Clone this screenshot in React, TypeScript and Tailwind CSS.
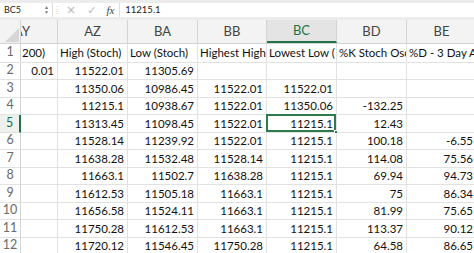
import React from 'react';

// Column headers: AY is scrolled half out of view behind the row numbers
const cols = [
  { id: 'AZ', w: 'w-[70px]' },
  { id: 'BA', w: 'w-[70px]' },
  { id: 'BB', w: 'w-[69px]' },
  { id: 'BC', w: 'w-[70px]' },
  { id: 'BD', w: 'w-[70px]' },
  { id: 'BE', w: 'w-[70px]' },
];

type Row = { ay: string; cells: string[] };

const rows: Row[] = [
  { ay: '200)', cells: ['High (Stoch)', 'Low (Stoch)', 'Highest High', 'Lowest Low (', '%K Stoch Osc', '%D - 3 Day Avg'] },
  { ay: '0.01', cells: ['11522.01', '11305.69', '', '', '', ''] },
  { ay: '', cells: ['11350.06', '10986.45', '11522.01', '11522.01', '', ''] },
  { ay: '', cells: ['11215.1', '10938.67', '11522.01', '11350.06', '-132.25', ''] },
  { ay: '', cells: ['11313.45', '11098.45', '11522.01', '11215.1', '12.43', ''] },
  { ay: '', cells: ['11528.14', '11239.92', '11522.01', '11215.1', '100.18', '-6.55'] },
  { ay: '', cells: ['11638.28', '11532.48', '11528.14', '11215.1', '114.08', '75.56'] },
  { ay: '', cells: ['11663.1', '11502.7', '11638.28', '11215.1', '69.94', '94.73'] },
  { ay: '', cells: ['11612.53', '11505.18', '11663.1', '11215.1', '75', '86.34'] },
  { ay: '', cells: ['11656.58', '11524.11', '11663.1', '11215.1', '81.99', '75.65'] },
  { ay: '', cells: ['11750.28', '11612.53', '11663.1', '11215.1', '113.37', '90.12'] },
  { ay: '', cells: ['11720.12', '11546.45', '11750.28', '11215.1', '64.58', '86.65'] },
];

function FormulaBar() {
  return (
    <div className="h-[20px] bg-[#ececec] pt-[3px]">
      <div className="h-[14px] bg-white flex items-center text-[#222]">
        <div className="w-[53px] h-full flex items-center justify-between pl-[4px] pr-[3px] border-r border-[#dcdcdc]">
          <span className="text-[9px] font-['Lato',sans-serif]">BC5</span>
          <span className="flex flex-col leading-none text-[5px] text-[#777]">
            <span>▲</span>
            <span>▼</span>
          </span>
        </div>
        <span className="ml-[3px] text-[8px] text-[#c8c8c8] leading-none">⁞</span>
        <span className="ml-[8px] text-[12px] text-[#b8b8b8] leading-none font-['DejaVu_Sans',sans-serif]">×</span>
        <span className="ml-[11px] text-[11px] text-[#b8b8b8] leading-none font-['DejaVu_Sans',sans-serif]">✓</span>
        <span className="ml-[10px] text-[11px] italic text-[#444] leading-none font-['Liberation_Serif',serif]">fx</span>
        <div className="ml-[5px] h-full border-l border-[#dcdcdc]" />
        <span className="ml-[5px] text-[9.5px] font-['Lato',sans-serif]">11215.1</span>
      </div>
    </div>
  );
}

function HeaderRow() {
  return (
    <div className="flex h-[24px] bg-[#f3f3f3] border-b border-[#d4d4d4] text-[13px] text-[#444]">
      <div className="w-[21px] shrink-0 h-full flex items-end justify-end border-r border-[#d4d4d4] relative z-10 bg-[#f3f3f3]">
        <svg width="14" height="14" viewBox="0 0 14 14" className="mb-[1px] mr-[1px]">
          <polygon points="14,0 14,14 0,14" fill="#d6d6d6" />
        </svg>
      </div>
      <div className="w-[37px] shrink-0 overflow-hidden flex justify-end border-r border-[#d4d4d4]">
        <div className="w-[70px] shrink-0 flex items-center justify-center">AY</div>
      </div>
      {cols.map((c) => (
        <div
          key={c.id}
          className={`${c.w} shrink-0 flex items-center justify-center border-r border-[#d4d4d4] ${
            c.id === 'BC' ? 'bg-[#e4e4e4] border-b-2 border-b-[#217346] text-[#217346]' : ''
          }`}
        >
          {c.id}
        </div>
      ))}
    </div>
  );
}

function DataRow({ row, n }: { row: Row; n: number }) {
  const active = n === 5;
  const isHead = n === 1;
  return (
    <div className={`flex ${n === 1 ? 'h-[18.5px]' : 'h-[17.5px]'} text-[11.5px] text-[#111]`}>
      <div
        className={`w-[21px] shrink-0 flex items-center justify-center text-[12.5px] border-b border-[#e2e2e2] ${
          active ? 'text-[#217346] border-r-2 border-r-[#217346] bg-[#eef2ee]' : 'text-[#6a6a6a] border-r border-r-[#d4d4d4]'
        }`}
      >
        {n}
      </div>
      <div
        className={`w-[37px] shrink-0 flex items-center overflow-hidden whitespace-nowrap border-r border-b border-[#e2e2e2] ${
          isHead ? 'justify-start pl-[1px]' : 'justify-end pr-[3px]'
        }`}
      >
        {row.ay}
      </div>
      {row.cells.map((v, i) => {
        const selected = active && cols[i].id === 'BC';
        return (
          <div
            key={i}
            className={`${cols[i].w} shrink-0 relative flex items-center overflow-hidden whitespace-nowrap border-r border-b border-[#e2e2e2] ${
              isHead ? 'justify-start pl-[2px]' : 'justify-end pr-[3px]'
            } ${selected ? 'overflow-visible' : ''}`}
          >
            {v}
            {selected && (
              <>
                <div className="absolute -left-[1px] -top-[1px] right-0 bottom-0 border-2 border-[#2f7a4c]" />
                <div className="absolute -right-[2px] -bottom-[2px] w-[4px] h-[4px] bg-[#2f7a4c] border border-white" />
              </>
            )}
          </div>
        );
      })}
    </div>
  );
}

export default function App() {
  return (
    <div className="w-[474px] h-[253px] overflow-hidden bg-white font-['Lato',sans-serif]">
      <FormulaBar />
      <HeaderRow />
      <div>
        {rows.map((r, i) => (
          <DataRow key={i} row={r} n={i + 1} />
        ))}
      </div>
    </div>
  );
}
